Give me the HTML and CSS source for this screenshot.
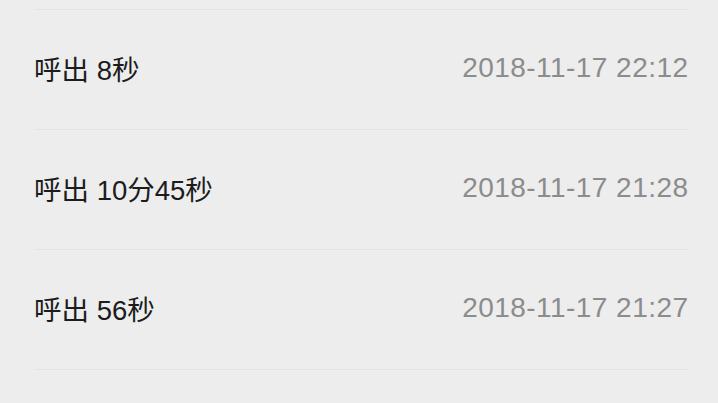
FILE: index.html
```html
<!DOCTYPE html>
<html lang="zh-CN">
<head>
    <meta charset="UTF-8">
    <meta name="viewport" content="width=device-width, initial-scale=1.0">
    <title>通话记录</title>
    <link rel="stylesheet" href="styles.css">
</head>
<body>
    <div class="call-list">
        <div class="call-row">
            <span class="call-desc">呼出 8秒</span>
            <span class="call-time">2018-11-17 22:12</span>
        </div>
        <div class="call-row">
            <span class="call-desc">呼出 10分45秒</span>
            <span class="call-time">2018-11-17 21:28</span>
        </div>
        <div class="call-row">
            <span class="call-desc">呼出 56秒</span>
            <span class="call-time">2018-11-17 21:27</span>
        </div>
    </div>
</body>
</html>
```

FILE: styles.css
```css
body {
    margin: 0;
    background: #ededed;
    font-family: 'Liberation Sans', 'Noto Sans CJK SC', sans-serif;
    overflow: hidden;
}
.call-list {
    margin: 9px 30px 0 34px;
    border-top: 1px solid #e3e3e3;
}
.call-row {
    display: flex;
    justify-content: space-between;
    align-items: center;
    height: 116px;
    padding-bottom: 3px;
    border-bottom: 1px solid #e3e3e3;
}
.call-desc { font-size: 27.5px; color: #1c1c1c; }
.call-time { font-size: 28px; color: #8c8c8c; letter-spacing: 0.45px; margin-right: -0.45px; }
```
